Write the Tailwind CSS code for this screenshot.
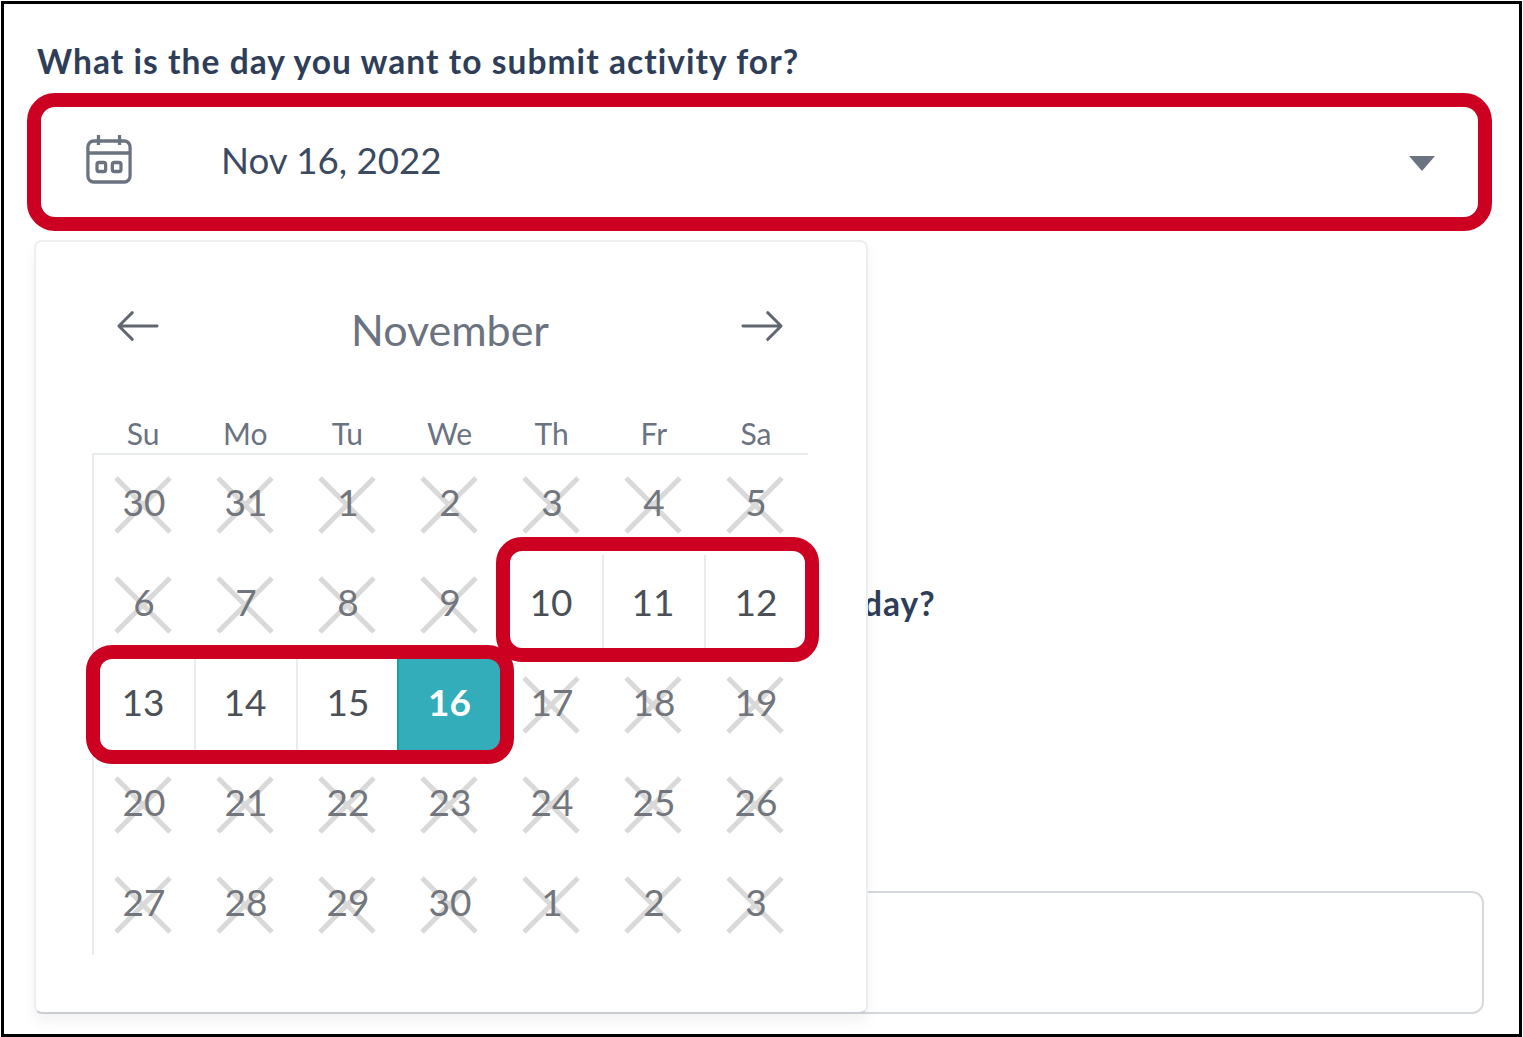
<!DOCTYPE html>
<html lang="en">
<head>
    <meta charset="UTF-8">
    <title>Activity day</title>
    <script src="https://cdn.jsdelivr.net/npm/@tailwindcss/browser@4"></script>
</head>
<body class="bg-white font-['Lato','Noto_Sans',sans-serif]">
<svg class="hidden">
    <symbol id="cross" viewBox="0 0 58 58">
        <path d="M2 2L56 56M56 2L2 56" stroke="#d9d9d9" stroke-width="5" fill="none"/>
    </symbol>
</svg>

<div class="relative ml-px mt-px w-[1521px] h-[1036px] border-[3px] border-black overflow-hidden">
    <!-- form behind the popup -->
    <div class="pl-[23px] pr-[27px] pt-[35px]">
        <h2 class="pl-[10px] h-[54px] text-[33.5px] leading-[44px] tracking-[1.06px] font-bold text-[#2f3e58]">What is the day you want to submit activity for?</h2>
        <div class="flex items-center h-[138px] border-[14px] border-[#cc0020] rounded-[28px] bg-white pl-[45px] pr-[42px]">
            <svg class="w-[46px] h-[50px] mb-[6px] text-[#6b7280]" viewBox="0 0 48 50" preserveAspectRatio="none" fill="none" stroke="currentColor" stroke-width="3.4">
                <rect x="2" y="7" width="44" height="41" rx="6"/>
                <path d="M2 19H46M13 1V11M35 1V11"/>
                <rect x="11.5" y="28.5" width="9" height="9" rx="2"/>
                <rect x="27.5" y="28.5" width="9" height="9" rx="2"/>
            </svg>
            <span class="ml-[89px] mb-[2px] text-[36.7px] text-[#3b4a60]">Nov 16, 2022</span>
            <svg class="ml-auto mt-[4px] w-[28px] h-[16px]" viewBox="0 0 28 16"><path d="M1 0H27L14 15Z" fill="#6b7280"/></svg>
        </div>
        <p class="mt-[352px] pl-[836px] h-[40px] text-[33.5px] leading-[40px] tracking-[1px] font-bold text-[#2f3e58]">day?</p>
        <div class="mt-[268px] ml-[8px] mr-[8px] h-[123px] border-2 border-[#d5d9de] rounded-[12px]"></div>
    </div>

    <!-- date popup -->
    <div class="absolute left-[30px] top-[236px] w-[834px] h-[774px] bg-white border-2 border-[#eceef0] border-b-[#c9cdd1] rounded-[8px] shadow-[0_8px_14px_rgba(0,0,0,0.05)] pl-[56px] pt-[56px]">
        <div class="flex items-center justify-between w-[715px] h-[56px] pl-[25px] pr-[24px]">
            <svg class="w-[42px] h-[32px]" viewBox="0 0 44 32" fill="none" stroke="#5f6670" stroke-width="3" stroke-linecap="round" stroke-linejoin="round"><path d="M42 16H3M16 2L2 16L16 30"/></svg>
            <span class="text-[43px] leading-[56px] text-[#6b7280] mt-[8px]">November</span>
            <svg class="w-[42px] h-[32px]" viewBox="0 0 44 32" fill="none" stroke="#5f6670" stroke-width="3" stroke-linecap="round" stroke-linejoin="round"><path d="M2 16H41M28 2L42 16L28 30"/></svg>
        </div>
        <div class="grid grid-cols-7 w-[715px] mt-[59px] h-[40px] text-center text-[30px] leading-[40px] text-[#6b7280]">
            <span>Su</span><span>Mo</span><span>Tu</span><span>We</span><span>Th</span><span>Fr</span><span>Sa</span>
        </div>
        <div class="grid grid-cols-7 auto-rows-[100px] w-[716px] border-t-2 border-l-2 border-[#e8ecec] text-center text-[37px] leading-[94px] text-[#72767c] [&>div]:pr-[2px]">
            <div class="relative"><svg class="absolute left-[20px] top-[21px] w-[58px] h-[58px]"><use href="#cross"/></svg><span class="relative">30</span></div>
            <div class="relative"><svg class="absolute left-[20px] top-[21px] w-[58px] h-[58px]"><use href="#cross"/></svg><span class="relative">31</span></div>
            <div class="relative"><svg class="absolute left-[20px] top-[21px] w-[58px] h-[58px]"><use href="#cross"/></svg><span class="relative">1</span></div>
            <div class="relative"><svg class="absolute left-[20px] top-[21px] w-[58px] h-[58px]"><use href="#cross"/></svg><span class="relative">2</span></div>
            <div class="relative"><svg class="absolute left-[20px] top-[21px] w-[58px] h-[58px]"><use href="#cross"/></svg><span class="relative">3</span></div>
            <div class="relative"><svg class="absolute left-[20px] top-[21px] w-[58px] h-[58px]"><use href="#cross"/></svg><span class="relative">4</span></div>
            <div class="relative"><svg class="absolute left-[20px] top-[21px] w-[58px] h-[58px]"><use href="#cross"/></svg><span class="relative">5</span></div>

            <div class="relative"><svg class="absolute left-[20px] top-[21px] w-[58px] h-[58px]"><use href="#cross"/></svg><span class="relative">6</span></div>
            <div class="relative"><svg class="absolute left-[20px] top-[21px] w-[58px] h-[58px]"><use href="#cross"/></svg><span class="relative">7</span></div>
            <div class="relative"><svg class="absolute left-[20px] top-[21px] w-[58px] h-[58px]"><use href="#cross"/></svg><span class="relative">8</span></div>
            <div class="relative"><svg class="absolute left-[20px] top-[21px] w-[58px] h-[58px]"><use href="#cross"/></svg><span class="relative">9</span></div>
            <div class="text-[#4b5056] border-r-2 border-[#e8ecec]">10</div>
            <div class="text-[#4b5056] border-r-2 border-[#e8ecec]">11</div>
            <div class="text-[#4b5056]">12</div>

            <div class="text-[#4b5056] border-r-2 border-[#e8ecec]">13</div>
            <div class="text-[#4b5056] border-r-2 border-[#e8ecec]">14</div>
            <div class="text-[#4b5056]">15</div>
            <div class="-ml-[3px] bg-[#33adba] border-l-2 border-[#14a39f] font-bold text-white">16</div>
            <div class="relative"><svg class="absolute left-[20px] top-[21px] w-[58px] h-[58px]"><use href="#cross"/></svg><span class="relative">17</span></div>
            <div class="relative"><svg class="absolute left-[20px] top-[21px] w-[58px] h-[58px]"><use href="#cross"/></svg><span class="relative">18</span></div>
            <div class="relative"><svg class="absolute left-[20px] top-[21px] w-[58px] h-[58px]"><use href="#cross"/></svg><span class="relative">19</span></div>

            <div class="relative"><svg class="absolute left-[20px] top-[21px] w-[58px] h-[58px]"><use href="#cross"/></svg><span class="relative">20</span></div>
            <div class="relative"><svg class="absolute left-[20px] top-[21px] w-[58px] h-[58px]"><use href="#cross"/></svg><span class="relative">21</span></div>
            <div class="relative"><svg class="absolute left-[20px] top-[21px] w-[58px] h-[58px]"><use href="#cross"/></svg><span class="relative">22</span></div>
            <div class="relative"><svg class="absolute left-[20px] top-[21px] w-[58px] h-[58px]"><use href="#cross"/></svg><span class="relative">23</span></div>
            <div class="relative"><svg class="absolute left-[20px] top-[21px] w-[58px] h-[58px]"><use href="#cross"/></svg><span class="relative">24</span></div>
            <div class="relative"><svg class="absolute left-[20px] top-[21px] w-[58px] h-[58px]"><use href="#cross"/></svg><span class="relative">25</span></div>
            <div class="relative"><svg class="absolute left-[20px] top-[21px] w-[58px] h-[58px]"><use href="#cross"/></svg><span class="relative">26</span></div>

            <div class="relative"><svg class="absolute left-[20px] top-[21px] w-[58px] h-[58px]"><use href="#cross"/></svg><span class="relative">27</span></div>
            <div class="relative"><svg class="absolute left-[20px] top-[21px] w-[58px] h-[58px]"><use href="#cross"/></svg><span class="relative">28</span></div>
            <div class="relative"><svg class="absolute left-[20px] top-[21px] w-[58px] h-[58px]"><use href="#cross"/></svg><span class="relative">29</span></div>
            <div class="relative"><svg class="absolute left-[20px] top-[21px] w-[58px] h-[58px]"><use href="#cross"/></svg><span class="relative">30</span></div>
            <div class="relative"><svg class="absolute left-[20px] top-[21px] w-[58px] h-[58px]"><use href="#cross"/></svg><span class="relative">1</span></div>
            <div class="relative"><svg class="absolute left-[20px] top-[21px] w-[58px] h-[58px]"><use href="#cross"/></svg><span class="relative">2</span></div>
            <div class="relative"><svg class="absolute left-[20px] top-[21px] w-[58px] h-[58px]"><use href="#cross"/></svg><span class="relative">3</span></div>
        </div>
    </div>

    <!-- red highlights over the selectable days -->
    <div class="absolute left-[492px] top-[533px] w-[323px] h-[125px] border-[14px] border-[#cc0020] rounded-[26px]"></div>
    <div class="absolute left-[82px] top-[641px] w-[428px] h-[119px] border-[14px] border-[#cc0020] rounded-[26px]"></div>
</div>
</body>
</html>
